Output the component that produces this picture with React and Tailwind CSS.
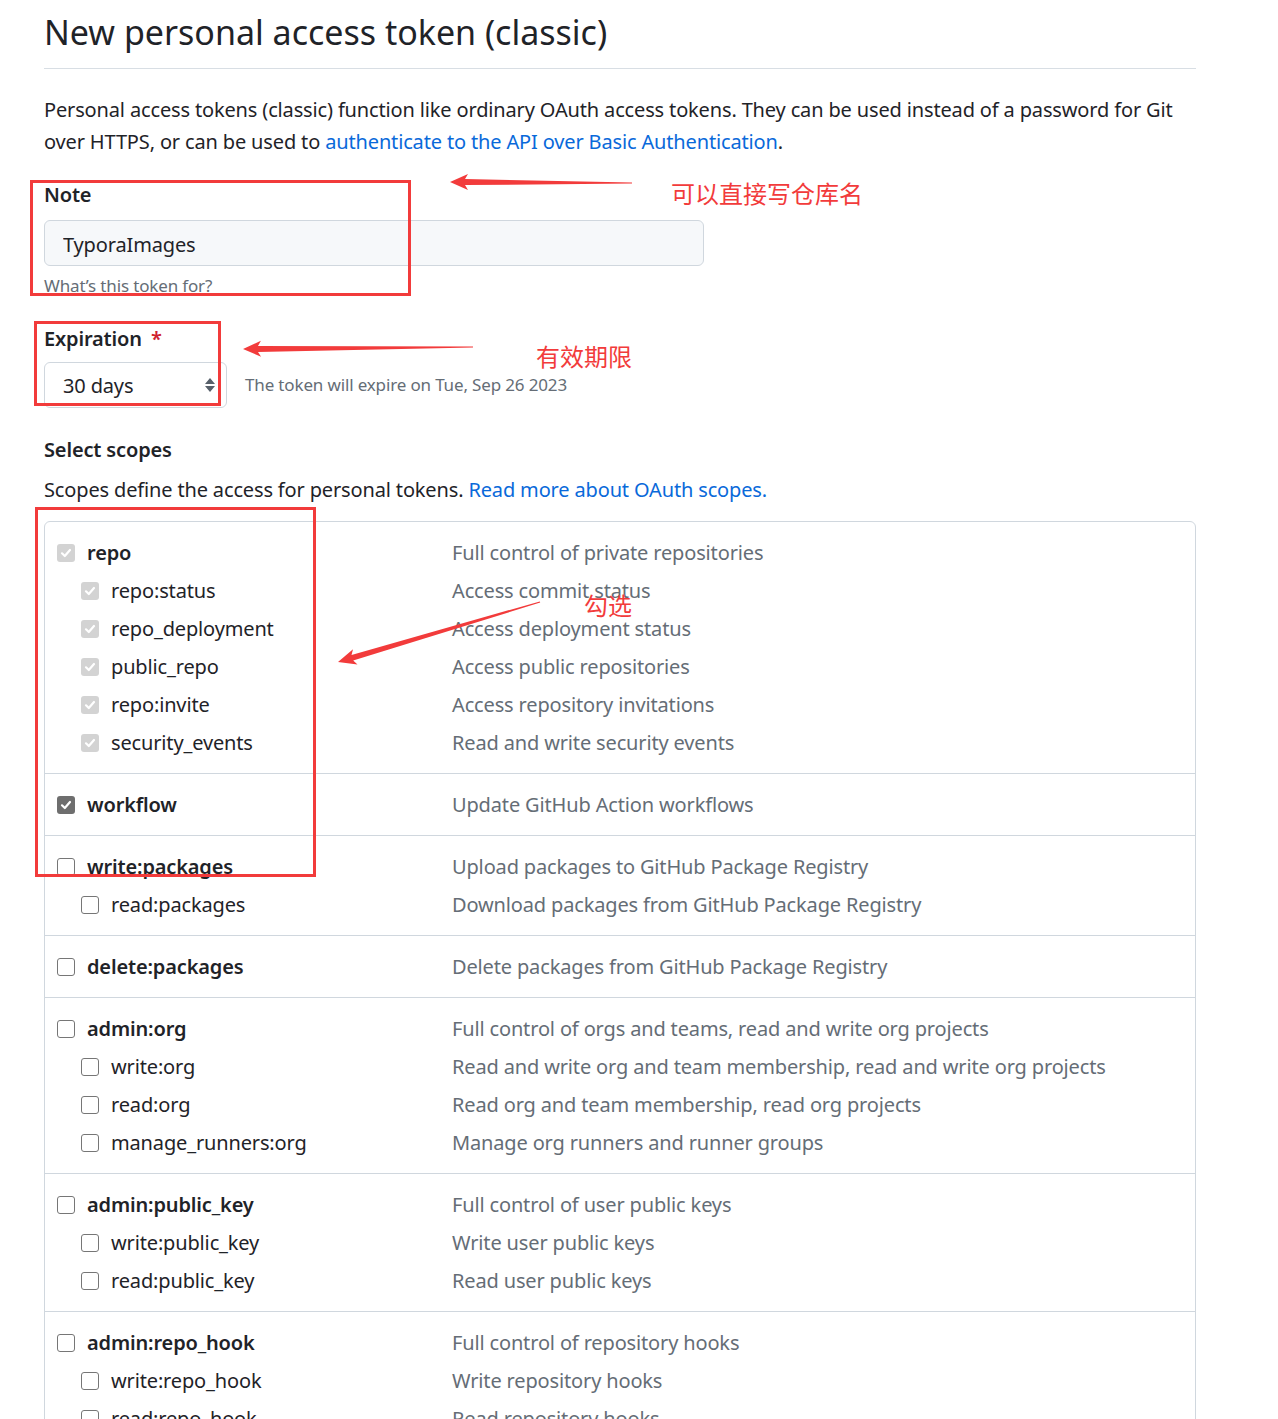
import { useState } from 'react'

const font = { fontFamily: '"Segoe UI", "Noto Sans", "Noto Sans CJK SC", sans-serif' }
const cjk = { fontFamily: '"Noto Sans CJK SC", sans-serif' }

const groups = [
  {
    name: 'repo',
    desc: 'Full control of private repositories',
    state: 'locked',
    children: [
      ['repo:status', 'Access commit status'],
      ['repo_deployment', 'Access deployment status'],
      ['public_repo', 'Access public repositories'],
      ['repo:invite', 'Access repository invitations'],
      ['security_events', 'Read and write security events'],
    ],
  },
  { name: 'workflow', desc: 'Update GitHub Action workflows', state: 'on', children: [] },
  {
    name: 'write:packages',
    desc: 'Upload packages to GitHub Package Registry',
    children: [['read:packages', 'Download packages from GitHub Package Registry']],
  },
  { name: 'delete:packages', desc: 'Delete packages from GitHub Package Registry', children: [] },
  {
    name: 'admin:org',
    desc: 'Full control of orgs and teams, read and write org projects',
    children: [
      ['write:org', 'Read and write org and team membership, read and write org projects'],
      ['read:org', 'Read org and team membership, read org projects'],
      ['manage_runners:org', 'Manage org runners and runner groups'],
    ],
  },
  {
    name: 'admin:public_key',
    desc: 'Full control of user public keys',
    children: [
      ['write:public_key', 'Write user public keys'],
      ['read:public_key', 'Read user public keys'],
    ],
  },
  {
    name: 'admin:repo_hook',
    desc: 'Full control of repository hooks',
    children: [
      ['write:repo_hook', 'Write repository hooks'],
      ['read:repo_hook', 'Read repository hooks'],
    ],
  },
]

function Tick() {
  return (
    <svg width="12" height="12" viewBox="0 0 12 12">
      <path d="M2 6.3 L4.8 9 L10 3" fill="none" stroke="white" strokeWidth="2.2" strokeLinecap="round" strokeLinejoin="round" />
    </svg>
  )
}

function Box({ state }) {
  if (state === 'locked') {
    return (
      <span className="w-[18px] h-[18px] rounded-[3px] bg-[#d3d3d3] flex items-center justify-center shrink-0">
        <Tick />
      </span>
    )
  }
  if (state === 'on') {
    return (
      <span className="w-[18px] h-[18px] rounded-[3px] bg-[#6e6e6e] flex items-center justify-center shrink-0">
        <Tick />
      </span>
    )
  }
  return <span className="w-[18px] h-[18px] rounded-[3px] border-[1.5px] border-[#767676] bg-white shrink-0" />
}

function ScopeRow({ name, desc, state, nested }) {
  return (
    <div className="flex items-center h-[38px]">
      <div className={`w-[407px] flex items-center gap-3 shrink-0 ${nested ? 'pl-[36px]' : 'pl-[12px]'}`}>
        <Box state={state} />
        <span className={nested ? 'text-[#1f2328]' : 'font-semibold text-[#1f2328]'}>{name}</span>
      </div>
      <span className="text-[#656d76]">{desc}</span>
    </div>
  )
}

// tapered arrow, tail (sx, sy) -> tip (tx, ty)
function arrow(sx, sy, tx, ty) {
  const len = Math.hypot(tx - sx, ty - sy)
  const ux = (tx - sx) / len
  const uy = (ty - sy) / len
  const nx = -uy
  const ny = ux
  const bx = tx - ux * 18
  const by = ty - uy * 18
  const p = (x, y) => `${x.toFixed(1)},${y.toFixed(1)}`
  return [
    p(tx, ty),
    p(bx + nx * 8, by + ny * 8),
    p(bx + ux * 3 + nx * 3, by + uy * 3 + ny * 3),
    p(sx + nx * 0.6, sy + ny * 0.6),
    p(sx - nx * 0.6, sy - ny * 0.6),
    p(bx + ux * 3 - nx * 3, by + uy * 3 - ny * 3),
    p(bx - nx * 8, by - ny * 8),
  ].join(' ')
}

export default function App() {
  const [note, setNote] = useState('TyporaImages')

  return (
    <div className="relative bg-white min-h-[1419px] text-[20px] tracking-[-0.15px] text-[#1f2328]" style={font}>
      <div className="pl-[44px] pt-[8px] w-[1196px] pb-10">
        <h1 className="text-[34px] tracking-normal leading-[48px] font-normal pb-[12px] border-b border-[#d8dee4]">
          New personal access token (classic)
        </h1>

        <p className="mt-[25px] leading-[32px]">
          Personal access tokens (classic) function like ordinary OAuth access tokens. They can be used instead of a password for Git over HTTPS, or can be used to{' '}
          <a className="text-[#0969da]">authenticate to the API over Basic Authentication</a>.
        </p>

        <div className="mt-[22px] font-semibold leading-[30px]">Note</div>
        <input
          value={note}
          onChange={(e) => setNote(e.target.value)}
          className="mt-[10px] w-[660px] h-[46px] px-[18px] pt-[2px] bg-[#f6f8fa] border border-[#d0d7de] rounded-[6px] outline-none text-[20px] tracking-[-0.15px]"
        />
        <div className="mt-[8px] text-[17px] leading-[24px] text-[#656d76]">What’s this token for?</div>

        <div className="mt-[26px] font-semibold leading-[30px]">
          Expiration <span className="text-[#cf222e] ml-1">*</span>
        </div>
        <div className="mt-[8px] flex items-center gap-[18px]">
          <div className="w-[183px] h-[46px] border border-[#d0d7de] rounded-[6px] flex items-center justify-between pl-[18px] pr-[10px]">
            <span className="pt-[2px]">30 days</span>
            <svg width="12" height="18" viewBox="0 0 12 18">
              <path d="M6 2 L11 8 H1 Z M6 16 L11 10 H1 Z" fill="#57606a" />
            </svg>
          </div>
          <span className="text-[17px] text-[#656d76]">The token will expire on Tue, Sep 26 2023</span>
        </div>

        <div className="mt-[27px] font-semibold leading-[30px]">Select scopes</div>
        <p className="mt-[9px] leading-[32px]">
          Scopes define the access for personal tokens. <a className="text-[#0969da]">Read more about OAuth scopes.</a>
        </p>

        <div className="mt-[15px] border border-[#d0d7de] rounded-[6px]">
          {groups.map((g, i) => (
            <div key={g.name} className={`pt-[12px] pb-[11px] ${i > 0 ? 'border-t border-[#d0d7de]' : ''}`}>
              <ScopeRow name={g.name} desc={g.desc} state={g.state} />
              {g.children.map(([n, d]) => (
                <ScopeRow key={n} name={n} desc={d} state={g.state === 'locked' ? 'locked' : 'off'} nested />
              ))}
            </div>
          ))}
        </div>
      </div>

      <svg className="absolute left-0 top-0 pointer-events-none" width="1278" height="1419">
        <rect x="31.5" y="181.5" width="378" height="113" fill="none" stroke="#f23b3b" strokeWidth="3" />
        <rect x="35.5" y="322.5" width="184" height="82" fill="none" stroke="#f23b3b" strokeWidth="3" />
        <rect x="36.5" y="508.5" width="278" height="367" fill="none" stroke="#f23b3b" strokeWidth="3" />
        <polygon points={arrow(632, 183, 450, 182)} fill="#f23b3b" />
        <polygon points={arrow(473, 347, 243, 349)} fill="#f23b3b" />
        <polygon points={arrow(540, 602, 338, 662)} fill="#f23b3b" />
      </svg>
      <span className="absolute left-[671px] top-[177px] text-[24px] leading-[32px] tracking-normal text-[#f23b3b]" style={cjk}>
        可以直接写仓库名
      </span>
      <span className="absolute left-[536px] top-[340px] text-[24px] leading-[32px] tracking-normal text-[#f23b3b]" style={cjk}>
        有效期限
      </span>
      <span className="absolute left-[584px] top-[589px] text-[24px] leading-[32px] tracking-normal text-[#f23b3b]" style={cjk}>
        勾选
      </span>
    </div>
  )
}
